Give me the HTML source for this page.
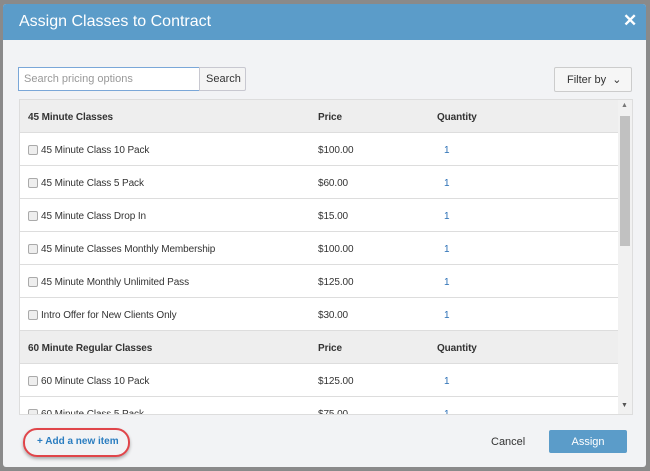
<!DOCTYPE html><html><head><style>
body{margin:0;width:650px;height:471px;background:#8a8a8a;font-family:"Liberation Sans",sans-serif;position:relative;overflow:hidden}
.m{position:absolute;left:3px;top:4px;width:643px;height:463px;background:#f2f3f5;border-radius:3px;overflow:hidden}
.h{position:absolute;left:0;top:0;width:643px;height:36px;background:#5b9cc9;color:#fff;font-size:16px}
.a{position:absolute;font-size:11px;color:#333;white-space:nowrap}
.tb{position:absolute;left:16px;top:95px;width:612px;height:314px;background:#fff;border:1px solid #ddd;overflow:hidden}
.r{position:absolute;left:0;width:598px;height:32px;border-bottom:1px solid #ddd;background:#fff}
.r.g{background:#eeeeee;font-weight:bold}
.r span{position:absolute;top:12px;font-size:10px;color:#333;white-space:nowrap;letter-spacing:-0.1px}
.cb{position:absolute;left:8px;top:12px;width:8px;height:8px;border:1px solid #aaa;border-radius:2px;background:#eee}
</style></head><body><div class="m">
<div class="h"><span style="position:absolute;left:16px;top:9px">Assign Classes to Contract</span><span style="position:absolute;left:620px;top:7px;font-weight:bold;font-size:17px">✕</span></div>
<div style="position:absolute;left:15px;top:63px;width:180px;height:22px;background:#fff;border:1px solid #7aa7d8;"><span class="a" style="left:5px;top:5px;color:#999;font-size:11px">Search pricing options</span></div>
<div style="position:absolute;left:196px;top:63px;width:45px;height:22px;background:#f4f4f4;border:1px solid #c8c8d0;border-radius:0 2px 2px 0"><span class="a" style="left:6px;top:5px">Search</span></div>
<div style="position:absolute;left:551px;top:63px;width:76px;height:23px;background:#f6f6f6;border:1px solid #ccc;border-radius:2px"><span class="a" style="left:12px;top:5px">Filter by &nbsp;⌄</span></div>
<div class="tb">
<div class="r g" style="top:0"><span style="left:8px">45 Minute Classes</span><span style="left:298px">Price</span><span style="left:417px">Quantity</span></div>
<div class="r" style="top:33px"><i class="cb"></i><span style="left:21px">45 Minute Class 10 Pack</span><span style="left:298px">$100.00</span><span style="left:424px;color:#2a6fb5">1</span></div>
<div class="r" style="top:66px"><i class="cb"></i><span style="left:21px">45 Minute Class 5 Pack</span><span style="left:298px">$60.00</span><span style="left:424px;color:#2a6fb5">1</span></div>
<div class="r" style="top:99px"><i class="cb"></i><span style="left:21px">45 Minute Class Drop In</span><span style="left:298px">$15.00</span><span style="left:424px;color:#2a6fb5">1</span></div>
<div class="r" style="top:132px"><i class="cb"></i><span style="left:21px">45 Minute Classes Monthly Membership</span><span style="left:298px">$100.00</span><span style="left:424px;color:#2a6fb5">1</span></div>
<div class="r" style="top:165px"><i class="cb"></i><span style="left:21px">45 Minute Monthly Unlimited Pass</span><span style="left:298px">$125.00</span><span style="left:424px;color:#2a6fb5">1</span></div>
<div class="r" style="top:198px"><i class="cb"></i><span style="left:21px">Intro Offer for New Clients Only</span><span style="left:298px">$30.00</span><span style="left:424px;color:#2a6fb5">1</span></div>
<div class="r g" style="top:231px"><span style="left:8px">60 Minute Regular Classes</span><span style="left:298px">Price</span><span style="left:417px">Quantity</span></div>
<div class="r" style="top:264px"><i class="cb"></i><span style="left:21px">60 Minute Class 10 Pack</span><span style="left:298px">$125.00</span><span style="left:424px;color:#2a6fb5">1</span></div>
<div class="r" style="top:297px"><i class="cb"></i><span style="left:21px">60 Minute Class 5 Pack</span><span style="left:298px">$75.00</span><span style="left:424px;color:#2a6fb5">1</span></div>
<div style="position:absolute;left:598px;top:0;width:14px;height:314px;background:#f1f1f1"><div style="position:absolute;left:2px;top:16px;width:10px;height:130px;background:#c1c1c1"></div><span style="position:absolute;left:3px;top:2px;font-size:7px;color:#777">▲</span><span style="position:absolute;left:3px;top:302px;font-size:7px;color:#555">▼</span></div>
</div>
<div style="position:absolute;left:20px;top:424px;width:103px;height:25px;border:2px solid #e0454a;border-radius:14px;box-shadow:0 2px 3px rgba(0,0,0,.3)"></div>
<span class="a" style="left:34px;top:432px;color:#2a7dc0;font-weight:bold;font-size:10px">+ Add a new item</span>
<span class="a" style="left:488px;top:432px">Cancel</span>
<div style="position:absolute;left:546px;top:426px;width:78px;height:23px;background:#5b9cc9;border-radius:2px;color:#fff;font-size:11px;text-align:center;line-height:25px">Assign</div>
</div></body></html>
